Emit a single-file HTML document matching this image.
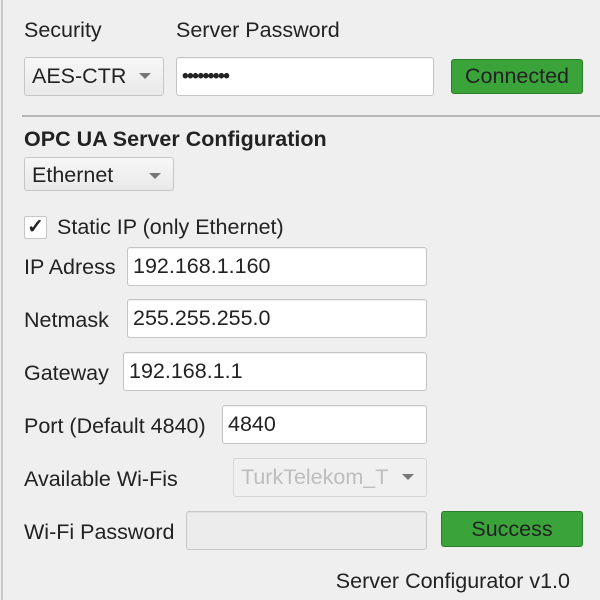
<!DOCTYPE html>
<html><head><meta charset="utf-8"><style>
*{box-sizing:border-box;margin:0;padding:0}
body{width:600px;height:600px;background:#efefef;font-family:"Liberation Sans",sans-serif;font-size:21.5px;color:#222;position:relative;overflow:hidden}
.a{position:absolute;white-space:nowrap}
.lbl{position:absolute;white-space:nowrap;line-height:24px}
.in{position:absolute;background:#fff;border:1px solid #c4c4c4;border-radius:3px;padding-left:5px;line-height:37px;box-shadow:inset 0 1px 1px rgba(0,0,0,.06)}
.cb{position:absolute;background:linear-gradient(#f7f7f7,#e9e9e9);border:1px solid #c6c6c6;border-radius:3px;padding-left:7px;line-height:34px}
.cb:after{content:"";position:absolute;right:12px;top:15px;border-left:6px solid transparent;border-right:6px solid transparent;border-top:6px solid #777}
.btn{position:absolute;background:#3aa33a;border:1px solid #2a7d2a;border-radius:3px;text-align:center;color:#222}
</style></head><body>
<div class="a" style="left:1px;top:0;width:2px;height:600px;background:#c8c8c8"></div>
<div class="lbl" style="left:24px;top:18px">Security</div>
<div class="lbl" style="left:176px;top:18px">Server Password</div>
<div class="cb" style="left:24px;top:57px;width:140px;height:39px;line-height:37px">AES-CTR</div>
<div class="in" style="left:176px;top:57px;width:258px;height:39px;font-weight:bold;letter-spacing:-1.5px;font-size:19px">•••••••••</div>
<div class="btn" style="left:451px;top:59px;width:132px;height:35px;line-height:33px">Connected</div>
<div class="a" style="left:22px;top:115px;width:578px;height:2px;background:#b5b5b5"></div>
<div class="lbl" style="left:24px;top:127px;font-weight:bold">OPC UA Server Configuration</div>
<div class="cb" style="left:24px;top:157px;width:150px;height:34px">Ethernet</div>
<div class="a" style="left:24px;top:216px;width:23px;height:23px;background:#fff;border:1px solid #c6c6c6;border-radius:2px;font-size:20px;line-height:21px;text-align:center;font-weight:bold">✓</div>
<div class="lbl" style="left:57px;top:215px">Static IP (only Ethernet)</div>
<div class="lbl" style="left:24px;top:255px">IP Adress</div>
<div class="in" style="left:127px;top:247px;width:300px;height:39px">192.168.1.160</div>
<div class="lbl" style="left:24px;top:308px">Netmask</div>
<div class="in" style="left:127px;top:299px;width:300px;height:39px">255.255.255.0</div>
<div class="lbl" style="left:24px;top:361px">Gateway</div>
<div class="in" style="left:123px;top:352px;width:304px;height:39px">192.168.1.1</div>
<div class="lbl" style="left:24px;top:414px">Port (Default 4840)</div>
<div class="in" style="left:222px;top:405px;width:205px;height:39px">4840</div>
<div class="lbl" style="left:24px;top:467px">Available Wi-Fis</div>
<div class="cb" style="left:233px;top:458px;width:194px;height:39px;line-height:37px;color:#bdbdbd;background:#f0f0f0;border-color:#d6d6d6">TurkTelekom_T</div>
<div class="lbl" style="left:24px;top:520px">Wi-Fi Password</div>
<div class="in" style="left:186px;top:511px;width:241px;height:39px;background:#ececec;border-color:#c8c8c8"></div>
<div class="btn" style="left:441px;top:511px;width:142px;height:36px;line-height:34px">Success</div>
<div class="lbl" style="right:30px;top:569px">Server Configurator v1.0</div>
</body></html>
